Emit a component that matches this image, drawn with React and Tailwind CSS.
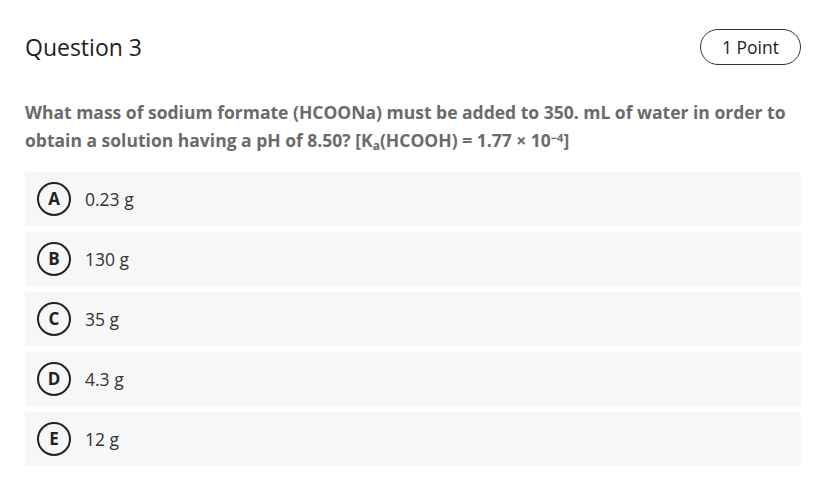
import React from 'react';

const options = [
    { key: 'A', text: '0.23 g' },
    { key: 'B', text: '130 g' },
    { key: 'C', text: '35 g' },
    { key: 'D', text: '4.3 g' },
    { key: 'E', text: '12 g' },
];

export default function App() {
    return (
        <div className="w-[835px] h-[481px] bg-white pl-[25px] pr-[34px] pt-[29px] font-['Open_Sans',sans-serif] text-[#222]">
            <header className="flex items-center justify-between">
                <h1 className="text-[23px] leading-[36px] text-[#222]">Question 3</h1>
                <span className="h-[36px] w-[101px] flex items-center justify-center rounded-full border border-[#333] text-[17.5px] text-[#222]">1 Point</span>
            </header>

            <p className="mt-[33px] text-[17.5px] leading-[28px] font-bold text-[#6b6b6b]">
                What mass of sodium formate (HCOONa) must be added to 350. mL of water in order to obtain a solution having a pH of 8.50? [K<sub className="text-[12px]">a</sub>(HCOOH) = 1.77 × 10<sup className="text-[11px]">−4</sup>]
            </p>

            <div className="mt-[18px] flex flex-col gap-[6px]">
                {options.map(o => (
                    <div key={o.key} className="h-[54px] bg-[#f7f7f7] flex items-center pl-[12px]">
                        <div className="w-[34px] h-[34px] rounded-full border-2 border-[#222] flex items-center justify-center text-[17px] font-bold text-[#222]">{o.key}</div>
                        <span className="ml-[14px] text-[17.5px] text-[#333]">{o.text}</span>
                    </div>
                ))}
            </div>
        </div>
    );
}
